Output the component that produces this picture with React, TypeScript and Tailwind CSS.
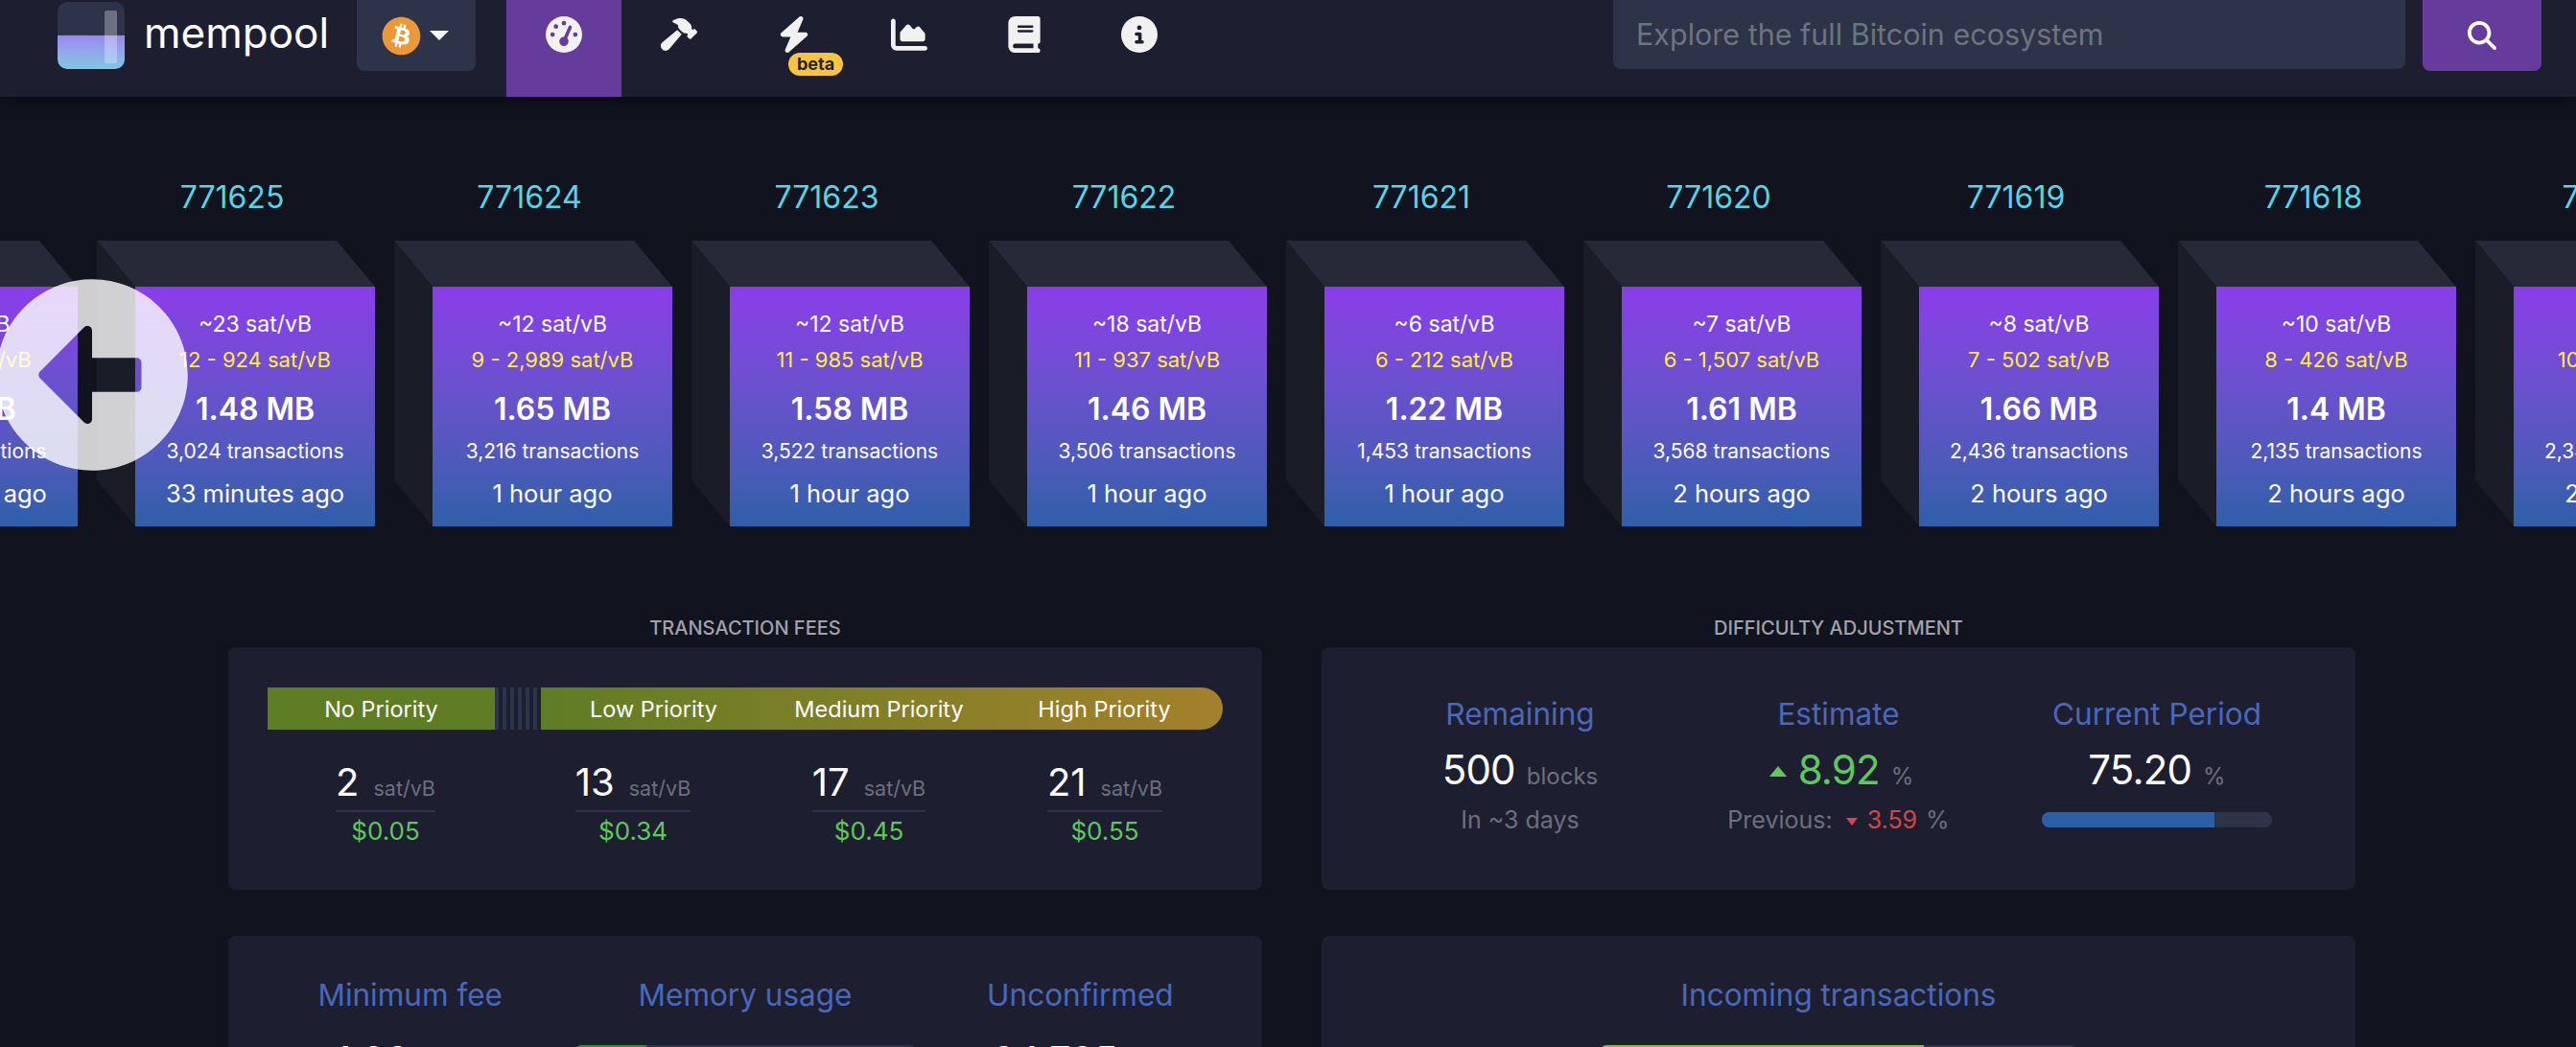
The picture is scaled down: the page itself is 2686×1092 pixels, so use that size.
import { FaArrowAltCircleLeft, FaBitcoin } from 'react-icons/fa';
import { FaBolt, FaBook, FaChartArea, FaCircleInfo, FaGaugeHigh, FaHammer, FaMagnifyingGlass } from 'react-icons/fa6';

const blocks = [
  { height: '771626', fee: '~11 sat/vB', range: '11 - 924 sat/vB', size: '1.62 MB', txs: '3,024 transactions', time: '22 minutes ago' },
  { height: '771625', fee: '~23 sat/vB', range: '12 - 924 sat/vB', size: '1.48 MB', txs: '3,024 transactions', time: '33 minutes ago' },
  { height: '771624', fee: '~12 sat/vB', range: '9 - 2,989 sat/vB', size: '1.65 MB', txs: '3,216 transactions', time: '1 hour ago' },
  { height: '771623', fee: '~12 sat/vB', range: '11 - 985 sat/vB', size: '1.58 MB', txs: '3,522 transactions', time: '1 hour ago' },
  { height: '771622', fee: '~18 sat/vB', range: '11 - 937 sat/vB', size: '1.46 MB', txs: '3,506 transactions', time: '1 hour ago' },
  { height: '771621', fee: '~6 sat/vB', range: '6 - 212 sat/vB', size: '1.22 MB', txs: '1,453 transactions', time: '1 hour ago' },
  { height: '771620', fee: '~7 sat/vB', range: '6 - 1,507 sat/vB', size: '1.61 MB', txs: '3,568 transactions', time: '2 hours ago' },
  { height: '771619', fee: '~8 sat/vB', range: '7 - 502 sat/vB', size: '1.66 MB', txs: '2,436 transactions', time: '2 hours ago' },
  { height: '771618', fee: '~10 sat/vB', range: '8 - 426 sat/vB', size: '1.4 MB', txs: '2,135 transactions', time: '2 hours ago' },
  { height: '771617', fee: '~11 sat/vB', range: '10 - 602 sat/vB', size: '1.51 MB', txs: '2,344 transactions', time: '2 hours ago' },
];

const fees = [
  { value: '2', usd: '$0.05', extra: 'mr-[12px]' },
  { value: '13', usd: '$0.34', extra: '' },
  { value: '17', usd: '$0.45', extra: '' },
  { value: '21', usd: '$0.55', extra: '' },
];

function Logo() {
  return (
    <div className="relative w-[70px] h-[70px] mt-[2px] rounded-[10px] overflow-hidden flex flex-col shrink-0">
      <div className="h-[35px] bg-[#2d3348] border-b border-[#3a3a5c]" />
      <div className="flex-1 bg-gradient-to-b from-[#9a87f0] to-[#7dc8e2]" />
      <div className="absolute left-[49px] top-[9px] w-[13px] h-[55px] rounded-[2px] bg-white/30" />
    </div>
  );
}

function NavItem({ children, active }: { children: React.ReactNode; active?: boolean }) {
  return (
    <div className={`relative w-[120px] h-[101px] pt-[17px] flex justify-center text-[38px] text-[#f1f1f1] ${active ? 'bg-[#653b9c]' : ''}`}>
      {children}
    </div>
  );
}

function Header() {
  return (
    <header className="relative z-10 h-[101px] bg-[#1d1f31] flex items-start pl-[60px] pr-[36px] shadow-[0_4px_14px_rgba(0,0,0,0.45)]">
      <Logo />
      <span className="ml-[20px] w-[190px] mt-[9px] text-[44px] leading-[50px] font-normal text-white whitespace-nowrap">mempool</span>
      <div className="ml-[32px] w-[124px] h-[74px] rounded-b-[8px] bg-[#2d3348] flex items-center pl-[26px] gap-[9px]">
        <div className="relative w-[41px] h-[41px] flex items-center justify-center">
          <div className="absolute w-[30px] h-[30px] rounded-full bg-white" />
          <FaBitcoin className="relative text-[41px] text-[#ea983a]" />
        </div>
        <div className="w-0 h-0 border-x-[10px] border-x-transparent border-t-[10px] border-t-white" />
      </div>
      <nav className="ml-[32px] flex">
        <NavItem active><FaGaugeHigh /></NavItem>
        <NavItem><FaHammer /></NavItem>
        <NavItem>
          <FaBolt />
          <span className="absolute left-[54px] top-[55px] w-[57px] h-[24px] rounded-full bg-[#f9c440] text-[#212529] text-[18px] leading-[24px] font-bold text-center">beta</span>
        </NavItem>
        <NavItem><FaChartArea /></NavItem>
        <NavItem><FaBook /></NavItem>
        <NavItem><FaCircleInfo /></NavItem>
      </nav>
      <div className="ml-auto flex items-start gap-[18px]">
        <div className="w-[826px] h-[72px] rounded-b-[8px] bg-[#2d3348] pl-[24px] flex items-center text-[30.5px] text-[#6c757d]">
          Explore the full Bitcoin ecosystem
        </div>
        <button className="w-[124px] h-[74px] rounded-b-[8px] bg-[#653b9c] flex items-center justify-center text-[30px] text-white">
          <FaMagnifyingGlass />
        </button>
      </div>
    </header>
  );
}

function Block({ b }: { b: (typeof blocks)[number] }) {
  return (
    <div className="w-[310px] shrink-0">
      <div className="w-[282px] h-[40px] leading-[40px] text-center text-[32px] text-[#56d5e8]">{b.height}</div>
      <div className="mt-[25px] w-[290px] h-[48px] bg-[#262938] [clip-path:polygon(0_0,250px_0,290px_48px,40px_48px)]" />
      <div className="-mt-[48px] flex">
        <div className="w-[40px] h-[298px] bg-[#1a1c28] [clip-path:polygon(0_0,40px_48px,40px_298px,0_250px)]" />
        <div className="mt-[48px] w-[250px] h-[250px] bg-gradient-to-b from-[#8a3ce9] to-[#2d5fa9] flex flex-col items-center text-white whitespace-nowrap">
          <div className="mt-[21px] h-[36px] leading-[36px] text-[23px]">{b.fee}</div>
          <div className="mt-[1px] h-[36px] leading-[36px] text-[22px] text-[#ffee3a]">{b.range}</div>
          <div className="mt-[12px] h-[44px] leading-[44px] text-[32px] font-semibold">{b.size}</div>
          <div className="mt-[4px] h-[36px] leading-[36px] text-[21px]">{b.txs}</div>
          <div className="mt-[8px] h-[36px] leading-[36px] text-[25.5px]">{b.time}</div>
        </div>
      </div>
    </div>
  );
}

function Blockchain() {
  return (
    <section className="relative overflow-hidden h-[448px] pt-[85px]">
      <div className="flex -ml-[209px]">
        {blocks.map((b) => <Block key={b.height} b={b} />)}
      </div>
      <FaArrowAltCircleLeft className="absolute -left-[7px] top-[187px] text-[206px] text-white opacity-80" />
    </section>
  );
}

function Title({ children }: { children: React.ReactNode }) {
  return <div className="h-[26px] pt-[1px] leading-[26px] text-center text-[20px] font-medium text-[#a2a2aa]">{children}</div>;
}

function FeesCard() {
  return (
    <div className="mt-[8px] h-[253px] rounded-[8px] bg-[#1d1f31] px-[41px] pt-[42px]">
      <div className="flex h-[44px] text-white text-[23.5px] leading-[46px]">
        <div className="w-[237px] bg-[#5e7d25] text-center">No Priority</div>
        <div className="w-[48px] bg-[repeating-linear-gradient(90deg,#2d3348_0,#2d3348_4px,#1d1f31_4px,#1d1f31_8px)]" />
        <div className="flex-1 flex pr-[6px] rounded-r-[22px] bg-gradient-to-r from-[#5e7d25] to-[#a4802c]">
          <div className="w-[235px] text-center">Low Priority</div>
          <div className="w-[235px] text-center">Medium Priority</div>
          <div className="w-[235px] text-center">High Priority</div>
        </div>
      </div>
      <div className="mt-[30px] flex">
        {fees.map((f) => (
          <div key={f.value} className={`w-[246px] flex justify-center ${f.extra}`}>
            <div className="flex flex-col">
              <div className="h-[50px] leading-[50px] text-white text-[40px] whitespace-nowrap">
                {f.value}
                <span className="ml-[15px] text-[21.5px] text-[#6c6f7d]">sat/vB</span>
              </div>
              <div className="mt-[4px] pt-[4px] text-center border-t-2 border-[#2f3248] leading-[32px] text-[26px] text-[#5fc75c]">{f.usd}</div>
            </div>
          </div>
        ))}
      </div>
    </div>
  );
}

function Stat({ label, children }: { label: string; children: React.ReactNode }) {
  return (
    <div className="flex flex-col items-center whitespace-nowrap">
      <div className="h-[44px] leading-[44px] text-[31.5px] font-normal text-[#4a68b9]">{label}</div>
      {children}
    </div>
  );
}

function DifficultyCard() {
  return (
    <div className="mt-[8px] h-[253px] rounded-[8px] bg-[#1d1f31] px-[41px] pt-[48px] grid grid-cols-3">
      <Stat label="Remaining">
        <div className="mt-[8px] h-[56px] leading-[56px] text-[42px] tracking-[-0.02em] text-white">
          500<span className="ml-[12px] text-[24px] tracking-normal text-[#6c6f7d]">blocks</span>
        </div>
        <div className="mt-[6px] h-[36px] leading-[36px] text-[25px] text-[#6c6f7d]">In ~3 days</div>
      </Stat>
      <Stat label="Estimate">
        <div className="mt-[8px] ml-[6px] h-[56px] leading-[56px] text-[42px] tracking-[-0.02em] text-[#5fc75c]">
          <span className="inline-block align-middle mr-[12px] mb-[4px] w-0 h-0 border-x-[9px] border-x-transparent border-b-[11px] border-b-[#5fc75c]" />
          8.92<span className="ml-[12px] text-[24px] tracking-normal text-[#6c6f7d]">%</span>
        </div>
        <div className="mt-[6px] h-[36px] leading-[36px] text-[25px] text-[#6c6f7d] flex items-center">
          Previous:
          <div className="ml-[14px] mr-[10px] mt-[4px] w-0 h-0 border-x-[6px] border-x-transparent border-t-[8px] border-t-[#d64545]" />
          <span className="text-[#d64545]">3.59</span>
          <span className="ml-[9px]">%</span>
        </div>
      </Stat>
      <Stat label="Current Period">
        <div className="mt-[8px] h-[56px] leading-[56px] text-[42px] tracking-[-0.02em] text-white">
          75.20<span className="ml-[12px] text-[24px] tracking-normal text-[#6c6f7d]">%</span>
        </div>
        <div className="mt-[16px] w-[240px] h-[16px] rounded-[8px] overflow-hidden bg-[#2d3348]">
          <div className="h-full w-[75%] bg-[#2d5fa9]" />
        </div>
      </Stat>
    </div>
  );
}

function MempoolCard() {
  return (
    <div className="mt-[48px] h-[200px] rounded-[8px] bg-[#1d1f31] px-[15px] pt-[40px] grid grid-cols-3">
      <Stat label="Minimum fee">
        <div className="mt-[21px] h-[50px] leading-[50px] text-[40px] text-white">
          1.00<span className="ml-[12px] text-[22px] text-[#6c6f7d]">sat/vB</span>
        </div>
      </Stat>
      <Stat label="Memory usage">
        <div className="mt-[30px] w-[355px] h-[30px] rounded-[6px] overflow-hidden bg-[#2d3348]">
          <div className="h-full w-[21%] bg-[#3d8b3d]" />
        </div>
      </Stat>
      <Stat label="Unconfirmed">
        <div className="mt-[21px] h-[50px] leading-[50px] text-[40px] text-white">
          34,795<span className="ml-[12px] text-[22px] text-[#6c6f7d]">TXs</span>
        </div>
      </Stat>
    </div>
  );
}

function IncomingCard() {
  return (
    <div className="mt-[48px] h-[200px] rounded-[8px] bg-[#1d1f31] pt-[40px] flex flex-col items-center">
      <div className="h-[44px] leading-[44px] text-[31.5px] text-[#4a68b9]">Incoming transactions</div>
      <div className="mt-[30px] w-[497px] h-[30px] rounded-[6px] overflow-hidden bg-[#2d3348]">
        <div className="h-full w-[68%] bg-[#84b84c]" />
      </div>
    </div>
  );
}

export default function App() {
  return (
    <div className="w-[2686px] h-[1092px] overflow-hidden bg-[#11131f] font-['Inter',sans-serif]">
      <Header />
      <Blockchain />
      <main className="ml-[238px] mt-[92px] grid grid-cols-[1078px_1078px] gap-x-[62px]">
        <div>
          <Title>TRANSACTION FEES</Title>
          <FeesCard />
          <MempoolCard />
        </div>
        <div>
          <Title>DIFFICULTY ADJUSTMENT</Title>
          <DifficultyCard />
          <IncomingCard />
        </div>
      </main>
    </div>
  );
}
